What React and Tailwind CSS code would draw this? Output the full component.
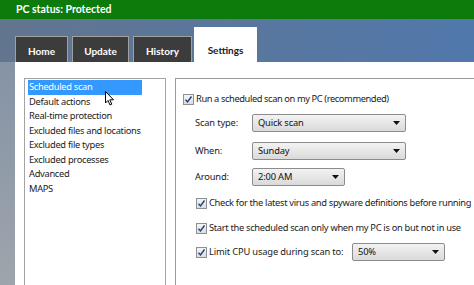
import React from 'react';

const Check = ({ className = '' }) => (
    <span className={`w-[11px] h-[11px] border border-[#8e8f8f] bg-gradient-to-b from-[#f4f4f4] to-[#d9dde3] flex items-center justify-center shrink-0 ${className}`}>
        <svg width="9" height="9" viewBox="0 0 9 9">
            <path d="M1.5 4.8 L3.5 7 L7.5 1.5" fill="none" stroke="#1f3f7a" strokeWidth="1.4" />
        </svg>
    </span>
);

const Select = ({ value, width }) => (
    <div className={`${width} h-[18px] border border-[#8c8c8c] rounded-[2px] bg-gradient-to-b from-[#f3f3f3] to-[#dadada] flex items-center justify-between pl-[5px] pr-[5px] shrink-0`}>
        <span className="text-[#111]">{value}</span>
        <svg width="7" height="4" viewBox="0 0 7 4">
            <path d="M0 0 H7 L3.5 4 Z" fill="#111" />
        </svg>
    </div>
);

const listItems = [
    'Scheduled scan',
    'Default actions',
    'Real-time protection',
    'Excluded files and locations',
    'Excluded file types',
    'Excluded processes',
    'Advanced',
    'MAPS',
];

const tabClass = "h-[26px] bg-[#3c3c3c] border border-b-0 border-[#a0a0a0] text-white font-bold text-[10px] flex items-center justify-center pt-[3px] font-['Lato',sans-serif] tracking-normal";

export default function App() {
    return (
        <div className="relative w-[474px] h-[285px] overflow-hidden bg-white flex flex-col font-['Noto_Sans',sans-serif] text-[9.3px] tracking-[-0.15px] text-[#1a1a1a]">
            {/* status bar */}
            <div className="h-[19px] bg-[#0c7b0c] text-white font-bold text-[10.5px] pl-[16px] flex items-center shrink-0 font-['Lato',sans-serif] tracking-normal">
                PC status: Protected
            </div>

            {/* tabs */}
            <div className="h-[43px] bg-gradient-to-r from-[#62758f] to-[#5078ab] flex items-end pl-[15px] shrink-0">
                <div className={`w-[53px] ${tabClass}`}>Home</div>
                <div className={`ml-[4px] w-[57px] ${tabClass}`}>Update</div>
                <div className={`ml-[4px] w-[59px] ${tabClass}`}>History</div>
                <div className="ml-[2px] w-[63px] h-[35px] bg-white text-[#1a1a1a] font-bold text-[10px] flex items-center justify-center pt-[12px] font-['Lato',sans-serif] tracking-normal">Settings</div>
            </div>

            <div className="flex flex-1">
                <div className="w-[15px] bg-gradient-to-b from-[#8593a6] to-[#a2a7ac] shrink-0"></div>
                <div className="flex-1 bg-white pl-[9px] pt-[16px] flex items-start gap-[9px]">
                    {/* list */}
                    <div className="w-[142px] h-[240px] border border-[#a3a3a3] pt-[1px] pl-[3px] shrink-0 tracking-[-0.3px]">
                        {listItems.map((item, i) => (
                            <div
                                key={item}
                                className={`h-[14.5px] leading-[14.5px] pl-[1px] w-[114px] whitespace-nowrap ${i === 0 ? 'bg-[#3399ff] text-white' : ''}`}
                            >
                                {item}
                            </div>
                        ))}
                    </div>

                    {/* settings panel */}
                    <div className="flex-1 h-[240px] border border-r-0 border-[#9a9a9a] pl-[7px] pt-[13px] whitespace-nowrap">
                        <div className="h-[14px] flex items-center gap-[2px]">
                            <Check />
                            <span className="tracking-[-0.4px]">Run a scheduled scan on my PC (recommended)</span>
                        </div>
                        <div className="mt-[8px] pl-[12px] flex items-center">
                            <span className="w-[57px]">Scan type:</span>
                            <Select value="Quick scan" width="w-[154px]" />
                        </div>
                        <div className="mt-[10px] pl-[12px] flex items-center">
                            <span className="w-[57px]">When:</span>
                            <Select value="Sunday" width="w-[154px]" />
                        </div>
                        <div className="mt-[8px] pl-[12px] flex items-center">
                            <span className="w-[57px]">Around:</span>
                            <Select value="2:00 AM" width="w-[93px]" />
                        </div>
                        <div className="mt-[10px] pl-[13px] h-[14px] flex items-center gap-[2px]">
                            <Check />
                            <span className="tracking-[-0.32px]">Check for the latest virus and spyware definitions before running</span>
                        </div>
                        <div className="mt-[11px] pl-[13px] h-[14px] flex items-center gap-[2px]">
                            <Check />
                            <span className="tracking-[-0.3px]">Start the scheduled scan only when my PC is on but not in use</span>
                        </div>
                        <div className="mt-[8px] pl-[13px] flex items-center gap-[2px]">
                            <Check />
                            <span className="w-[141px]">Limit CPU usage during scan to:</span>
                            <Select value="50%" width="w-[93px]" />
                        </div>
                    </div>
                </div>
            </div>

            {/* mouse pointer */}
            <svg className="absolute left-[105px] top-[91px]" width="10" height="15" viewBox="0 0 10 15">
                <path d="M0.5 0.5 V12 L3 9.5 L5 14 L6.8 13.2 L4.8 8.8 H8.5 Z" fill="#fff" stroke="#000" strokeWidth="1" strokeLinejoin="round" />
            </svg>
        </div>
    );
}
